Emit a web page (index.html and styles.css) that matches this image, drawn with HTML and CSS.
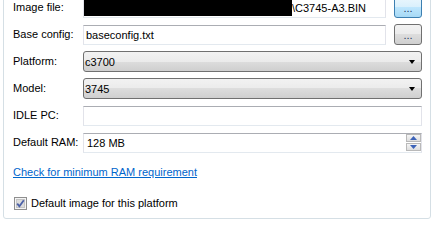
FILE: index.html
```html
<!DOCTYPE html>
<html>
<head>
<meta charset="utf-8">
<link rel="stylesheet" href="styles.css">
</head>
<body>
<div class="group">
  <div class="form">
    <span class="label">Image file:</span>
    <div class="field text"><span class="redact"></span><span>\C3745-A3.BIN</span></div>
    <button class="browse hot">...</button>

    <span class="label">Base config:</span>
    <div class="field text"><span>baseconfig.txt</span></div>
    <button class="browse">...</button>

    <span class="label">Platform:</span>
    <div class="field combo wide"><span>c3700</span><span class="arrow"></span></div>

    <span class="label">Model:</span>
    <div class="field combo wide"><span>3745</span><span class="arrow"></span></div>

    <span class="label">IDLE PC:</span>
    <div class="field text wide"></div>

    <span class="label">Default RAM:</span>
    <div class="field text wide ram"><span>128 MB</span>
      <span class="spin">
        <span class="spin-btn"><svg width="7" height="4" viewBox="0 0 7 4"><path d="M0 4 L3.5 0 L7 4 Z" fill="#3d63b8"/></svg></span>
        <span class="spin-btn"><svg width="7" height="4" viewBox="0 0 7 4"><path d="M0 0 L3.5 4 L7 0 Z" fill="#3d63b8"/></svg></span>
      </span>
    </div>
  </div>

  <a class="link" href="#">Check for minimum RAM requirement</a>

  <div class="check">
    <span class="box"><svg width="13" height="13" viewBox="0 0 13 13">
      <rect x="0.5" y="0.5" width="12" height="12" fill="#f4f4f4" stroke="#8f8f8f"/>
      <rect x="2.5" y="2.5" width="8" height="8" fill="#dcdcdc" stroke="#c4c4c4"/>
      <path d="M3.2 6.6 L5.4 9.2 L9.8 3.2" fill="none" stroke="#4c61a8" stroke-width="1.8"/>
    </svg></span>
    <span>Default image for this platform</span>
  </div>
</div>
</body>
</html>
```

FILE: styles.css
```css
html, body {
  margin: 0;
  padding: 0;
  background: #ffffff;
  overflow: hidden;
}

body {
  font-family: "Liberation Sans", Arial, sans-serif;
  font-size: 11px;
  color: #000;
  width: 437px;
  height: 229px;
}

.group {
  box-sizing: border-box;
  margin: -10px 0 0 3px;
  width: 428px;
  height: 229px;
  border: 1px solid #d5dfe5;
  border-radius: 3px;
  padding: 6px 8px 0 8px;
  display: flex;
  flex-direction: column;
}

.form {
  display: grid;
  grid-template-columns: 71px 1fr 8px 28px;
  grid-auto-rows: 21px;
  row-gap: 6px;
  align-items: center;
}

.label {
  grid-column: 1;
  padding-left: 1px;
  line-height: 13px;
}

.field {
  grid-column: 2;
  box-sizing: border-box;
  height: 21px;
  display: flex;
  align-items: center;
  overflow: hidden;
  white-space: nowrap;
}

.field.wide {
  grid-column: 2 / 5;
}

.text {
  border: 1px solid;
  border-color: #abadb3 #e2e3ea #e3e9ef #e2e3ea;
  background: #fff;
  padding-left: 2px;
  height: 20px;
}

.redact {
  align-self: flex-start;
  margin: -1px 0 0 -3px;
  width: 209px;
  height: 18px;
  background: #000;
  flex: none;
}

.combo {
  border: 1px solid #707070;
  border-radius: 3px;
  background: linear-gradient(#f2f2f2 0%, #ebebeb 50%, #dddddd 50%, #cfcfcf 100%);
  padding: 0 0 0 1px;
  justify-content: space-between;
}

.arrow {
  width: 0;
  height: 0;
  border-left: 3.5px solid transparent;
  border-right: 3.5px solid transparent;
  border-top: 4px solid #000;
  margin-right: 6px;
}

.browse {
  grid-column: 4;
  box-sizing: border-box;
  width: 28px;
  height: 21px;
  padding: 0 0 3px 0;
  border: 1px solid #707070;
  border-radius: 3px;
  background: linear-gradient(#f2f2f2 0%, #ebebeb 50%, #dddddd 50%, #cfcfcf 100%);
  font-family: "Liberation Sans", Arial, sans-serif;
  font-size: 11px;
  color: #1e395b;
  display: flex;
  align-items: flex-end;
  justify-content: center;
  line-height: 11px;
}

.browse.hot {
  border-color: #3c7fb1;
  background: linear-gradient(#eaf6fd 0%, #d9f0fc 50%, #bee6fd 50%, #a7d9f5 100%);
}

.ram {
  justify-content: space-between;
  padding-right: 0;
}

.ram > span:first-child {
  padding-left: 1px;
}

.spin {
  display: flex;
  flex-direction: column;
  gap: 1px;
  width: 15px;
  align-self: center;
}

.spin-btn {
  box-sizing: border-box;
  height: 8px;
  border: 1px solid #b9b9b9;
  background: linear-gradient(#f5f5f5, #dedede);
  display: flex;
  align-items: center;
  justify-content: center;
}

.link {
  margin: 13px 0 0 1px;
  color: #0066cc;
  text-decoration: underline;
  line-height: 13px;
  align-self: flex-start;
}

.check {
  margin-top: 18px;
  display: flex;
  align-items: center;
  gap: 4px;
  padding-left: 2px;
  line-height: 13px;
}

.box {
  display: flex;
  width: 13px;
  height: 13px;
}
```
